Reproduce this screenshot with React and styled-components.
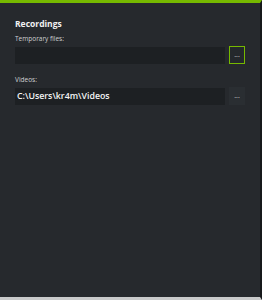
import React from 'react';
import styled, { createGlobalStyle } from 'styled-components';

const GlobalStyle = createGlobalStyle`
  html, body {
    margin: 0;
    padding: 0;
    background: #24282c;
  }
  * {
    box-sizing: border-box;
  }
`;

const Window = styled.div`
  width: 262px;
  height: 300px;
  display: flex;
  flex-direction: column;
  background: #26292d;
  border-top: 3px solid #76b900;
  border-right: 2px solid #17191b;
  border-bottom: 3px solid #c9cacb;
  font-family: "Open Sans", "Noto Sans", sans-serif;
  overflow: hidden;
`;

const Section = styled.div`
  display: flex;
  flex-direction: column;
  padding: 15px 15px 0 15px;
`;

const Title = styled.div`
  color: #f2f2f2;
  font-size: 8.5px;
  font-weight: 700;
  line-height: 12px;
  margin-bottom: 4px;
`;

const Label = styled.div`
  color: #cfd1d3;
  font-size: 6.5px;
  line-height: 10px;
  margin-bottom: 2px;
`;

const Row = styled.div`
  display: flex;
  align-items: center;
  gap: 4px;
  margin-bottom: ${p => p.$gap || 0}px;
`;

const PathBox = styled.div`
  flex: 1;
  height: 17px;
  background: #1d2023;
  color: #f4f4f4;
  font-size: 8.8px;
  font-weight: 600;
  line-height: 17px;
  padding-left: 2px;
  white-space: nowrap;
  overflow: hidden;
`;

const BrowseButton = styled.div`
  width: 16px;
  height: 18px;
  display: flex;
  align-items: center;
  justify-content: center;
  background: ${p => (p.$focused ? '#24282c' : '#2a2e32')};
  border: 1.5px solid ${p => (p.$focused ? '#76b900' : 'transparent')};
  color: #d8d8d8;
  font-size: 7px;
  line-height: 1;
  padding-bottom: 2px;
`;

export default function App() {
  return (
    <>
      <GlobalStyle />
      <Window>
        <Section>
          <Title>Recordings</Title>
          <Label>Temporary files:</Label>
          <Row $gap={11}>
            <PathBox />
            <BrowseButton $focused>...</BrowseButton>
          </Row>
          <Label>Videos:</Label>
          <Row>
            <PathBox>C:\Users\kr4m\Videos</PathBox>
            <BrowseButton>...</BrowseButton>
          </Row>
        </Section>
      </Window>
    </>
  );
}
